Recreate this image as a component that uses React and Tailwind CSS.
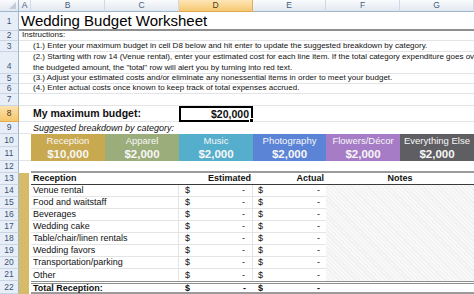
import React from "react";

const RH = ({ n, hl, end }) => (
  <div
    className={`flex ${end ? "items-end pb-[3px]" : "items-center"} justify-center border-b border-r leading-none text-[8.5px] ${
      hl
        ? "bg-[linear-gradient(#fce3ae,#f5c66c)] border-b-[#e2ad55] border-r-[#d9a24a] text-[#4a3a1a]"
        : "bg-[#e7eef7] border-b-[#c9d5e4] border-r-[#9eb6ce] text-[#3a5478]"
    }`}
  >
    {n}
  </div>
);

const CH = ({ l, hl }) => (
  <div
    className={`flex items-center justify-center border-b border-r leading-none text-[8.5px] ${
      hl
        ? "bg-[linear-gradient(#fde6b6,#f6c872)] border-b-[#e0a84e] border-r-[#e0b060] text-[#4f3c17]"
        : "bg-[linear-gradient(#fafbfd,#e2e8f0)] border-b-[#9eb6ce] border-r-[#d0d9e5] text-[#425c7e]"
    }`}
  >
    {l}
  </div>
);

const Box = ({ name, amt, bg }) => (
  <div className={`row-span-2 flex flex-col items-center justify-center ${bg} text-[#f7f7f7] leading-none`}>
    <div className="text-[9.5px] mt-[1px]">{name}</div>
    <div className="text-[11.5px] font-bold mt-[4px]">{amt}</div>
  </div>
);

const items = [
  "Venue rental",
  "Food and waitstaff",
  "Beverages",
  "Wedding cake",
  "Table/chair/linen rentals",
  "Wedding favors",
  "Transportation/parking",
  "Other",
];

export default function App() {
  const line = "border-b border-[#e2e4e8]";
  return (
    <div className="w-[474px] h-[294px] overflow-hidden bg-white font-['Liberation_Sans',Arial,sans-serif] text-[#111]">
      <div className="grid grid-cols-[19px_12px_74px_74px_74px_73px_74px_74px] grid-rows-[12px_19px_10px_11px_22px_10px_10px_12px_16px_12px_13px_14px_12px_12px_12px_12px_12px_12px_12px_12px_12px_12px_13px]">
        {/* header row */}
        <div className="relative bg-[linear-gradient(#fafbfd,#e2e8f0)] border-b border-r border-[#9eb6ce]">
          <svg className="absolute right-[2px] bottom-[2px]" width="7" height="7" viewBox="0 0 7 7">
            <polygon points="7,0 7,7 0,7" fill="#c3ccd8" />
          </svg>
        </div>
        <CH l="A" />
        <CH l="B" />
        <CH l="C" />
        <CH l="D" hl />
        <CH l="E" />
        <CH l="F" />
        <CH l="G" />

        {/* row 1 */}
        <RH n="1" />
        <div className="col-span-7 flex items-center pl-[2px] text-[15px] leading-none text-black border-b-2 border-[#8f8f8f]">
          Wedding Budget Worksheet
        </div>

        {/* row 2 */}
        <RH n="2" />
        <div className={`col-span-7 flex items-end pl-[3px] text-[8px] leading-none whitespace-nowrap overflow-hidden pb-[1px] ${line}`}>
          Instructions:
        </div>

        {/* row 3 */}
        <RH n="3" />
        <div className={`col-span-7 flex items-end pl-[14px] text-[8px] leading-none whitespace-nowrap overflow-hidden pb-[1px] ${line}`}>
          (1.) Enter your maximum budget in cell D8 below and hit enter to update the suggested breakdown by category.
        </div>

        {/* row 4 */}
        <RH n="4" end />
        <div className={`col-span-7 flex flex-col justify-end pl-[14px] text-[8px] leading-[11px] whitespace-nowrap overflow-hidden ${line}`}>
          <div>(2.) Starting with row 14 (Venue rental), enter your estimated cost for each line item. If the total category expenditure goes over</div>
          <div>the budgeted amount, the "total" row will alert you by turning into red text.</div>
        </div>

        {/* row 5 */}
        <RH n="5" />
        <div className={`col-span-7 flex items-end pl-[14px] text-[8px] leading-none whitespace-nowrap overflow-hidden pb-[1px] ${line}`}>
          (3.) Adjust your estimated costs and/or eliminate any nonessential items in order to meet your budget.
        </div>

        {/* row 6 */}
        <RH n="6" />
        <div className={`col-span-7 flex items-end pl-[14px] text-[8px] leading-none whitespace-nowrap overflow-hidden pb-[1px] ${line}`}>
          (4.) Enter actual costs once known to keep track of total expenses accrued.
        </div>

        {/* row 7 */}
        <RH n="7" />
        <div className={`col-span-7 ${line}`} />

        {/* row 8 */}
        <RH n="8" hl />
        <div className={line} />
        <div className={`col-span-2 flex items-center pl-[2px] text-[10.5px] font-bold leading-none ${line}`}>
          My maximum budget:
        </div>
        <div className="relative flex items-center justify-end pr-[2px] border-2 border-black text-[10.5px] font-bold leading-none">
          $20,000
          <div className="absolute -right-[3px] -bottom-[3px] w-[5px] h-[5px] bg-black border border-white" />
        </div>
        <div className={`col-span-3 ${line}`} />

        {/* row 9 */}
        <RH n="9" />
        <div className={line} />
        <div className="col-span-6 flex items-center pl-[2px] text-[9px] italic leading-none">
          Suggested breakdown by category:
        </div>

        {/* row 10-11 */}
        <RH n="10" />
        <div />
        <Box name="Reception" amt="$10,000" bg="bg-[#c8a94f]" />
        <Box name="Apparel" amt="$2,000" bg="bg-[#9aad7a]" />
        <Box name="Music" amt="$2,000" bg="bg-[#55afcc]" />
        <Box name="Photography" amt="$2,000" bg="bg-[#5b83d6]" />
        <Box name="Flowers/Décor" amt="$2,000" bg="bg-[#a67cc6]" />
        <Box name="Everything Else" amt="$2,000" bg="bg-[#5f5e63]" />
        <RH n="11" />
        <div className={line} />

        {/* row 12 */}
        <RH n="12" />
        <div />
        <div className="col-span-6 border-b-2 border-[#9c9c9c]" />

        {/* row 13 */}
        <RH n="13" />
        <div className="row-span-10 pr-[2px] bg-white">
          <div className="h-full bg-[#d6bb68]" />
        </div>
        <div className="col-span-2 flex items-center pl-[2px] text-[9px] font-bold leading-none border-b border-[#3a3a3a]">
          Reception
        </div>
        <div className="flex items-center justify-end pr-[2px] text-[9px] font-bold leading-none border-b border-[#3a3a3a]">
          Estimated
        </div>
        <div className="flex items-center justify-end pr-[2px] text-[9px] font-bold leading-none border-b border-[#3a3a3a]">
          Actual
        </div>
        <div className="col-span-2 flex items-center justify-center text-[9px] font-bold leading-none border-b border-[#3a3a3a]">
          Notes
        </div>

        {/* rows 14-21 */}
        {items.map((it, i) => (
          <React.Fragment key={it}>
            <RH n={String(14 + i)} />
            <div className={`col-span-2 flex items-center pl-[2px] text-[9px] leading-none border-r border-[#e4e4e4] ${i < 7 ? "border-b border-b-[#e4e4e4]" : ""}`}>
              {it}
            </div>
            <div className={`flex items-center justify-between pl-[6px] pr-[7px] text-[9px] leading-none border-r border-[#e4e4e4] ${i < 7 ? "border-b border-b-[#e4e4e4]" : ""}`}>
              <span>$</span>
              <span>-</span>
            </div>
            <div className={`flex items-center justify-between pl-[5px] pr-[6px] text-[9px] leading-none ${i < 7 ? "border-b border-[#e4e4e4]" : ""}`}>
              <span>$</span>
              <span>-</span>
            </div>
            {i === 0 && (
              <div className="col-span-2 row-span-8 bg-[repeating-linear-gradient(45deg,#f0f0f0_0px,#f0f0f0_1px,#f8f8f8_1px,#f8f8f8_3px)]" />
            )}
          </React.Fragment>
        ))}

        {/* row 22 */}
        <RH n="22" />
        <div className="col-span-2 flex items-center pl-[2px] text-[9px] font-bold leading-none border-t-[3px] border-double border-[#8f8f8f] border-b-2 border-b-[#9a9a9a]">
          Total Reception:
        </div>
        <div className="flex items-center justify-between pl-[6px] pr-[7px] text-[9px] font-bold leading-none border-t-[3px] border-double border-[#8f8f8f] border-b-2 border-b-[#9a9a9a]">
          <span>$</span>
          <span>-</span>
        </div>
        <div className="flex items-center justify-between pl-[5px] pr-[6px] text-[9px] font-bold leading-none border-t-[3px] border-double border-[#8f8f8f] border-b-2 border-b-[#9a9a9a]">
          <span>$</span>
          <span>-</span>
        </div>
        <div className="col-span-2 border-t-[3px] border-double border-[#8f8f8f] border-b-2 border-b-[#9a9a9a]" />
      </div>
    </div>
  );
}
